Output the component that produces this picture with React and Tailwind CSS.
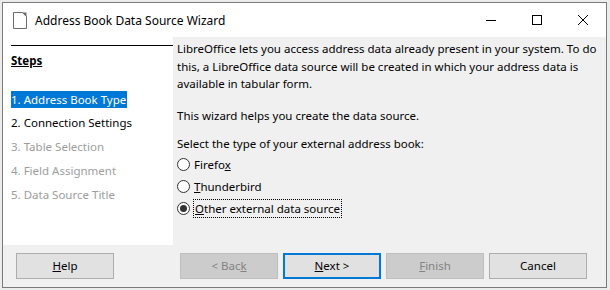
import React from 'react';

const font = { fontFamily: '"Noto Sans", "Segoe UI", sans-serif' };

const Radio = ({ checked, children, focused }) => (
  <label className="flex items-center h-[22px] gap-[4px]">
    <span className="w-[13px] h-[13px] rounded-full border border-[#333] bg-white flex items-center justify-center shrink-0">
      {checked && <span className="w-[7px] h-[7px] rounded-full bg-[#333]" />}
    </span>
    <span className={focused ? 'outline outline-1 outline-dotted outline-black px-[1px]' : ''}>{children}</span>
  </label>
);

const Button = ({ children, variant }) => {
  let cls = 'w-[98px] h-[26px] flex items-center justify-center border text-[11.5px] ';
  if (variant === 'disabled') cls += 'bg-[#cccccc] border-[#bfbfbf] text-[#838383]';
  else if (variant === 'default') cls += 'bg-[#e1e1e1] border-2 border-[#0078d7] text-black';
  else cls += 'bg-[#e1e1e1] border-[#adadad] text-black';
  return <div className={cls}>{children}</div>;
};

export default function App() {
  return (
    <div className="w-[610px] h-[290px] bg-[#ececec] pt-[2px] pl-[2px]" style={font}>
      <div className="w-[605px] h-[286px] border border-[#7a7a7a] bg-[#f0f0f0] flex flex-col text-[11.5px] text-black">
        {/* title bar */}
        <div className="h-[34px] bg-white flex items-center shrink-0">
          <svg width="14" height="17" viewBox="0 0 14 17" className="ml-[10px] mr-[8px]">
            <path d="M0.5 0.5 H9.5 L13.5 4.5 V16.5 H0.5 Z" fill="white" stroke="#6b6b6b" />
            <path d="M9 0.5 L13.5 5 V0.5 Z" fill="#6b6b6b" />
          </svg>
          <span className="text-[12px] mt-[1px]">Address Book Data Source Wizard</span>
          <div className="ml-auto flex h-full">
            <div className="w-[46px] flex items-center justify-center">
              <div className="w-[10px] h-px bg-black" />
            </div>
            <div className="w-[46px] flex items-center justify-center">
              <div className="w-[10px] h-[10px] border border-black" />
            </div>
            <div className="w-[46px] flex items-center justify-center">
              <svg width="10" height="10" viewBox="0 0 10 10">
                <path d="M0 0 L10 10 M10 0 L0 10" stroke="black" strokeWidth="1" />
              </svg>
            </div>
          </div>
        </div>

        {/* body */}
        <div className="flex h-[208px] shrink-0">
          <div className="w-[170px] bg-white pl-[8px] pt-[8px] shrink-0">
            <div className="h-px bg-black" />
            <div className="font-bold underline mt-[7px] leading-[16px]">Steps</div>
            <div className="mt-[18px] flex flex-col">
              <div className="h-[24px] flex items-center">
                <span className="bg-[#0078d7] text-white pr-[1px] leading-[17px]">1. Address Book Type</span>
              </div>
              <div className="h-[24px] flex items-center">2. Connection Settings</div>
              <div className="h-[24px] flex items-center text-[#9d9d9d]">3. Table Selection</div>
              <div className="h-[24px] flex items-center text-[#9d9d9d]">4. Field Assignment</div>
              <div className="h-[24px] flex items-center text-[#9d9d9d]">5. Data Source Title</div>
            </div>
          </div>
          <div className="flex-1 pl-[4px] pr-[1px] pt-[3px]">
            <p className="leading-[17.5px]">
              LibreOffice lets you access address data already present in your system. To do this, a LibreOffice data source will be created in which your address data is available in tabular form.
            </p>
            <p className="leading-[17px] mt-[14px]">This wizard helps you create the data source.</p>
            <p className="leading-[17px] mt-[11px]">Select the type of your external address book:</p>
            <div className="mt-[2px] flex flex-col">
              <Radio>Firefo<u>x</u></Radio>
              <Radio><u>T</u>hunderbird</Radio>
              <Radio checked focused><u>O</u>ther external data source</Radio>
            </div>
          </div>
        </div>

        {/* buttons */}
        <div className="flex items-start pt-[8px] pl-[13px]">
          <Button><span><u>H</u>elp</span></Button>
          <div className="ml-[66px] flex gap-[5px]">
            <Button variant="disabled"><span>&lt; Bac<u>k</u></span></Button>
            <Button variant="default"><span><u>N</u>ext &gt;</span></Button>
            <Button variant="disabled"><span><u>F</u>inish</span></Button>
            <Button><span>Cancel</span></Button>
          </div>
        </div>
      </div>
    </div>
  );
}
